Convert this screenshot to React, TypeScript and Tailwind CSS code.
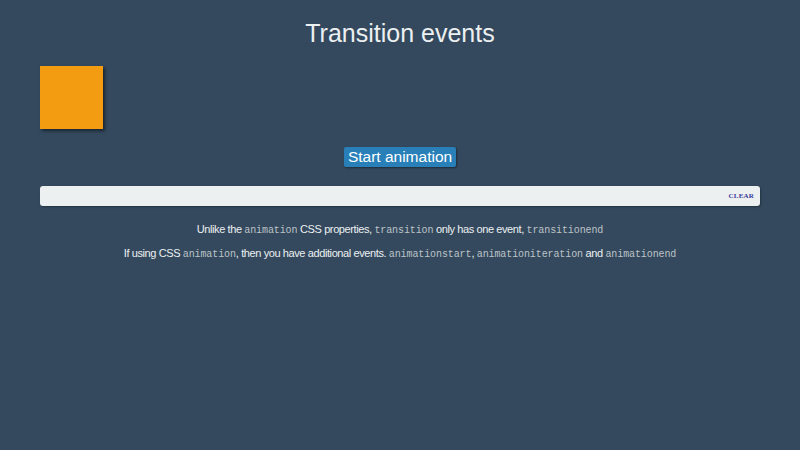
export default function App() {
  return (
    <div className="min-h-[450px] w-full bg-[#34495e] px-10 pt-4 font-['Liberation_Sans',Arial,sans-serif] text-[#ecf0f1]">
      <h1 className="text-center text-[25px] leading-[34px]">Transition events</h1>

      {/* animated box */}
      <div className="mt-4 h-[63px] w-[63px] bg-[#f39c12] shadow-[2px_2px_3px_rgba(0,0,0,0.5)]" />

      <div className="mt-[18px] flex justify-center">
        <button className="rounded-[2px] bg-[#2980b9] px-1 text-[15.5px] leading-[20px] text-white shadow-[1px_1px_2px_rgba(0,0,0,0.4)]">
          Start animation
        </button>
      </div>

      <div className="mt-[19px] flex h-5 items-center justify-end rounded-[3px] bg-[#ecf0f1] px-1.5 shadow-[1px_1px_2px_rgba(0,0,0,0.3)]">
        <button className="font-['Liberation_Serif',serif] text-[7px] font-bold tracking-wide text-[#3b3b9a]">
          CLEAR
        </button>
      </div>

      <div className="mt-[11px] text-center text-[11px] leading-6 tracking-[-0.4px]">
        <p>
          Unlike the <code className="font-['Liberation_Mono',monospace] text-[10px] leading-none tracking-[-0.1px] text-[#bdc3c7]">animation</code> CSS properties,{' '}
          <code className="font-['Liberation_Mono',monospace] text-[10px] leading-none tracking-[-0.1px] text-[#bdc3c7]">transition</code> only has one event,{' '}
          <code className="font-['Liberation_Mono',monospace] text-[10px] leading-none tracking-[-0.1px] text-[#bdc3c7]">transitionend</code>
        </p>
        <p>
          If using CSS <code className="font-['Liberation_Mono',monospace] text-[10px] leading-none tracking-[-0.1px] text-[#bdc3c7]">animation</code>, then you have additional events.{' '}
          <code className="font-['Liberation_Mono',monospace] text-[10px] leading-none tracking-[-0.1px] text-[#bdc3c7]">animationstart</code>,{' '}
          <code className="font-['Liberation_Mono',monospace] text-[10px] leading-none tracking-[-0.1px] text-[#bdc3c7]">animationiteration</code> and{' '}
          <code className="font-['Liberation_Mono',monospace] text-[10px] leading-none tracking-[-0.1px] text-[#bdc3c7]">animationend</code>
        </p>
      </div>
    </div>
  )
}
